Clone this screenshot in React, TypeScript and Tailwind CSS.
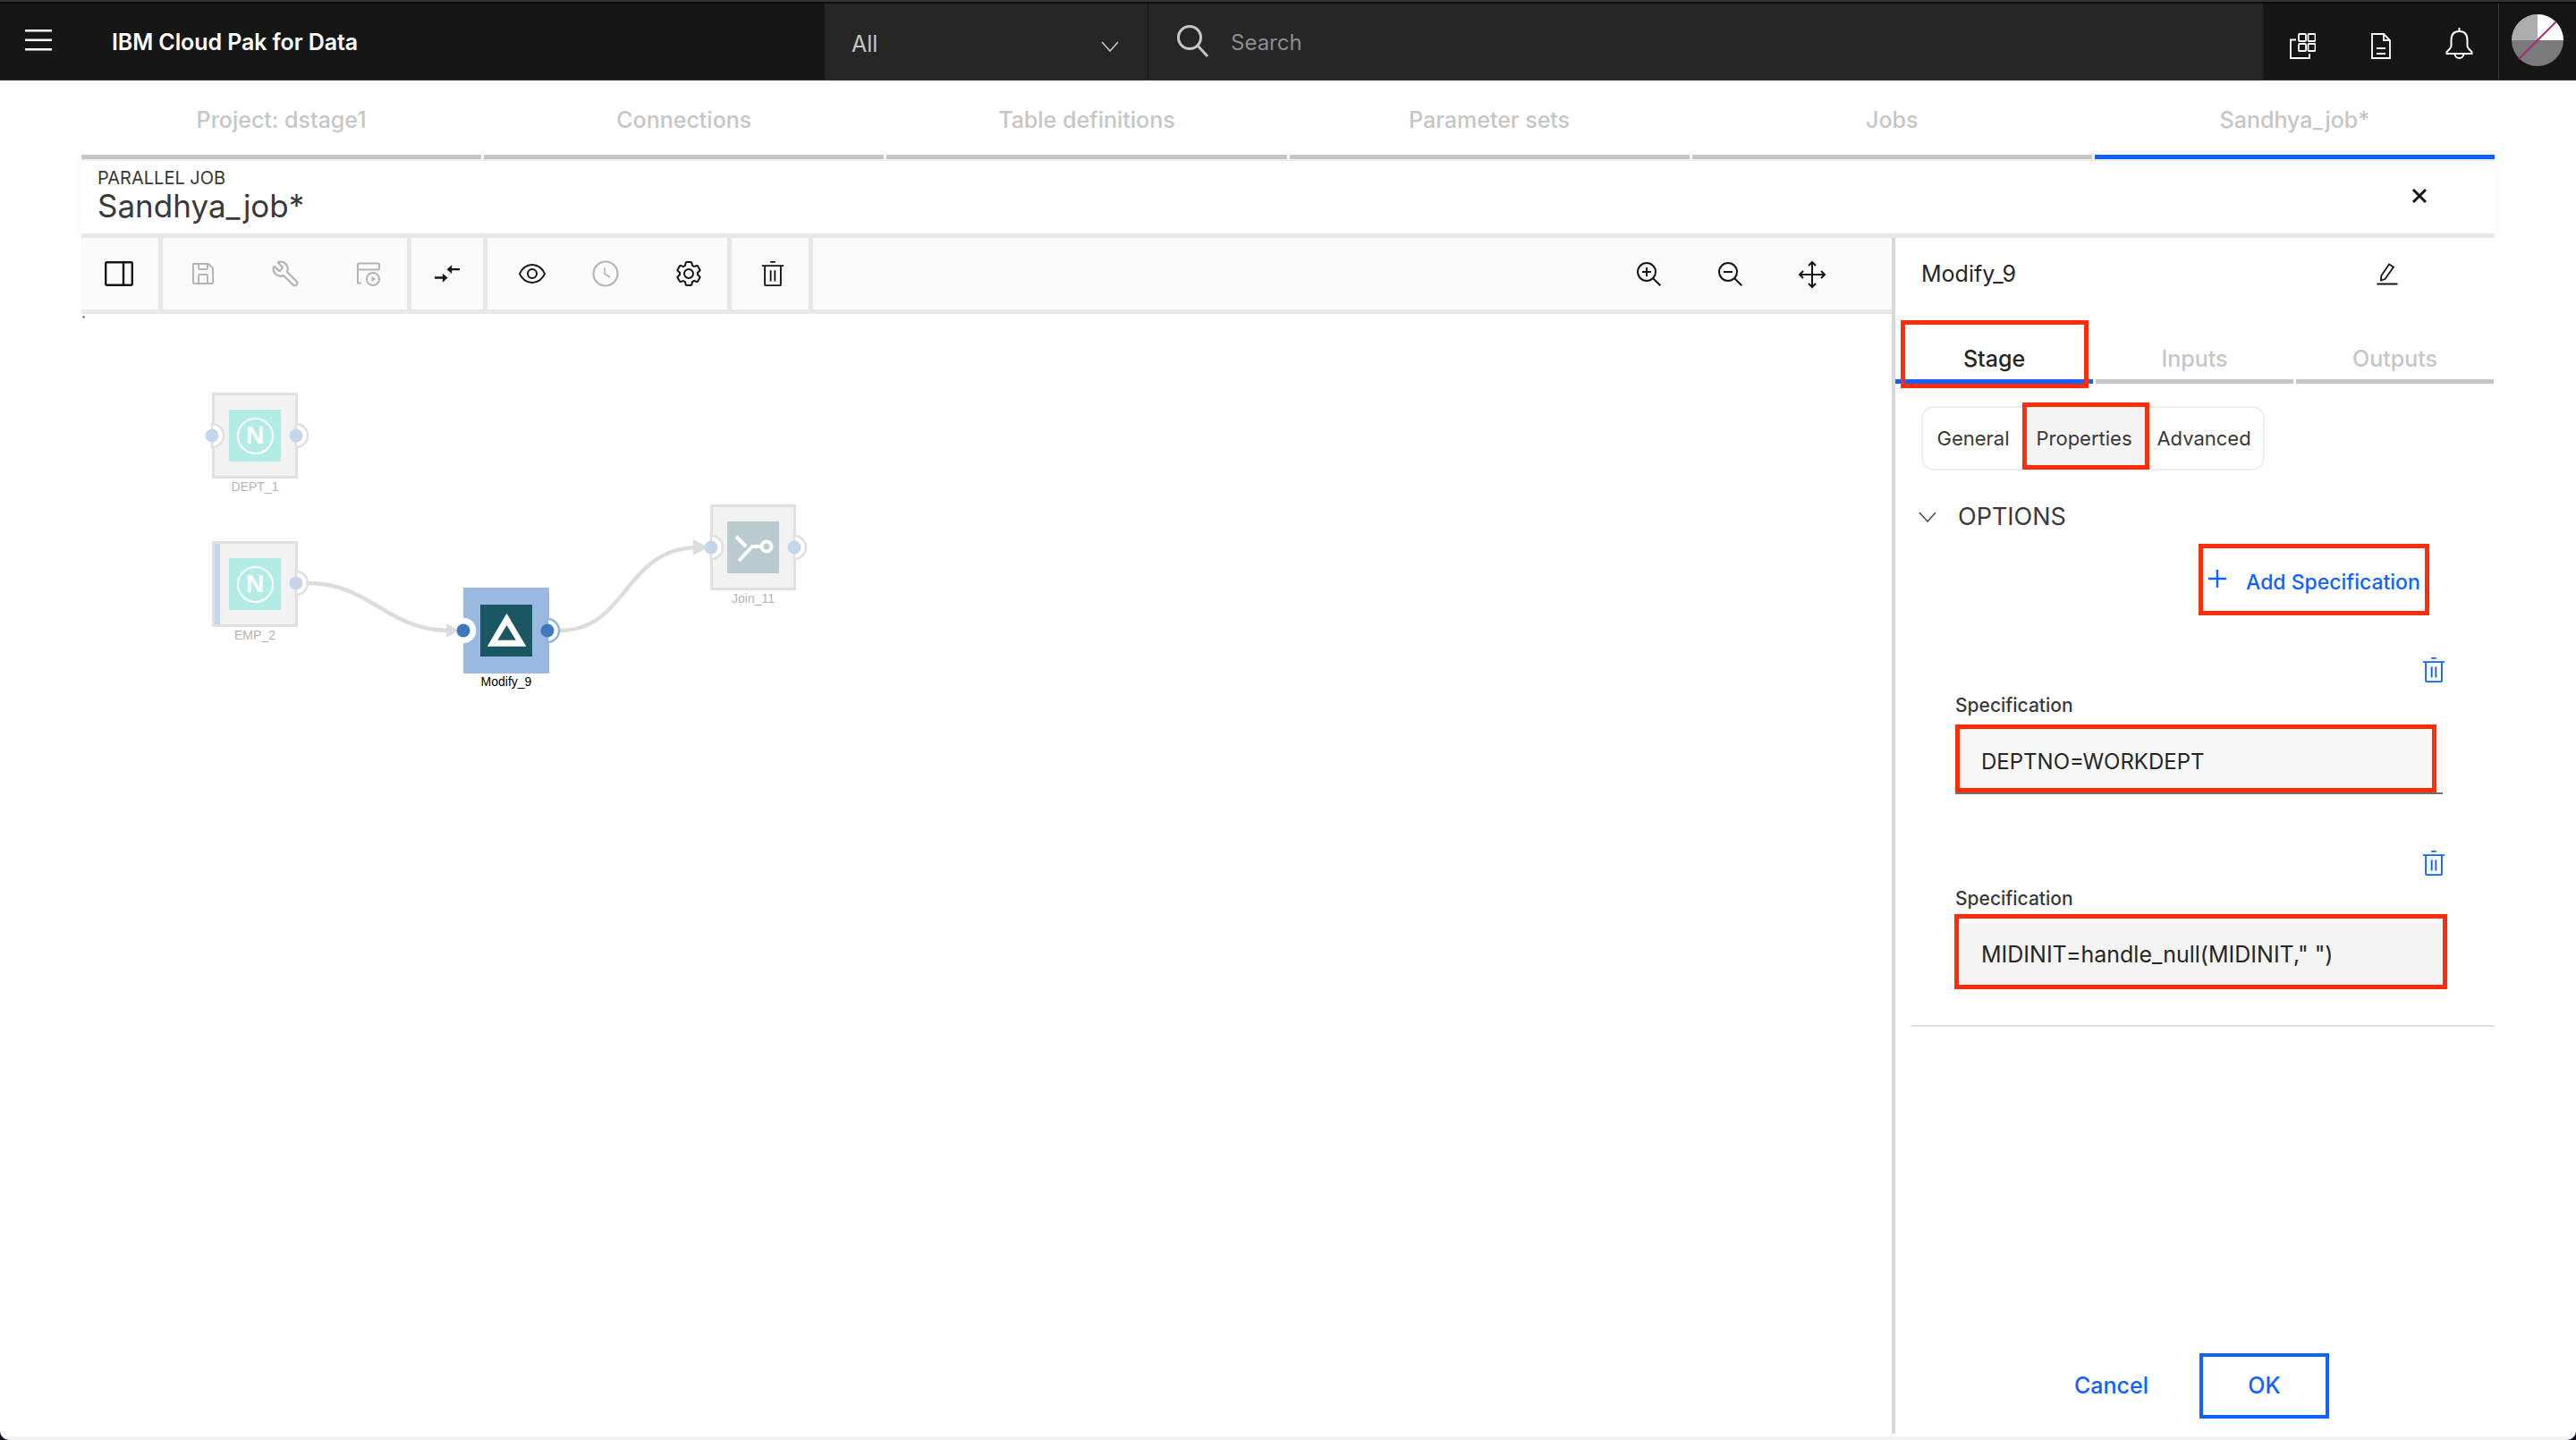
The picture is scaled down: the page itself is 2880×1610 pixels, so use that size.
import { Wrench } from 'lucide-react';

const tabs = ['Project: dstage1', 'Connections', 'Table definitions', 'Parameter sets', 'Jobs', 'Sandhya_job*'];

function SaveIcon({ className }: { className: string }) {
  return (
    <svg viewBox="0 0 32 32" fill="currentColor" className={className}>
      <path d="M27.71,9.29l-5-5A1,1,0,0,0,22,4H6A2,2,0,0,0,4,6V26a2,2,0,0,0,2,2H26a2,2,0,0,0,2-2V10A1,1,0,0,0,27.71,9.29ZM12,6h8v4H12Zm8,20H12V18h8Zm2,0V18a2,2,0,0,0-2-2H12a2,2,0,0,0-2,2v8H6V6h4v4a2,2,0,0,0,2,2h8a2,2,0,0,0,2-2V6.41l4,4V26Z" />
    </svg>
  );
}

function PanelIcon() {
  return (
    <svg viewBox="0 0 32 28" fill="none" stroke="currentColor" strokeWidth="2.4" className="w-[32px] h-[28px] text-[#161616]">
      <rect x="1.2" y="1.2" width="29.6" height="25.6" rx="1.5" />
      <path d="M21 1.2v25.6" />
    </svg>
  );
}

function RunIcon() {
  return (
    <svg viewBox="0 0 32 32" fill="none" stroke="currentColor" strokeWidth="2" className="w-[32px] h-[32px] text-[#b5b5b5]">
      <path d="M5 21V6a1.5 1.5 0 0 1 1.5-1.5h21A1.5 1.5 0 0 1 29 6v5.5M5 11.5h24M5 21v5.5h4" />
      <circle cx="22" cy="22" r="7" />
      <path d="M20.5 18.8v6.4l4.5-3.2z" fill="currentColor" stroke="none" />
    </svg>
  );
}

function CompressIcon() {
  return (
    <svg viewBox="0 0 32 32" fill="currentColor" className="w-[30px] h-[30px] text-[#161616]">
      <path d="M31 9.5H21.5V12H31zM21.5 5.5 15.5 10.8l6 5.2zM1 19.5h9.5V22H1zM10.5 15.7 16.5 20.8l-6 5.5z" />
    </svg>
  );
}

function EyeIcon() {
  return (
    <svg viewBox="0 0 32 32" fill="currentColor" className="w-[32px] h-[32px] text-[#161616]">
      <path d="M30.94,15.66A16.69,16.69,0,0,0,16,5,16.69,16.69,0,0,0,1.06,15.66a1,1,0,0,0,0,.68A16.69,16.69,0,0,0,16,27,16.69,16.69,0,0,0,30.94,16.34a1,1,0,0,0,0-.68ZM16,25c-5.3,0-10.9-3.93-12.93-9C5.1,10.93,10.7,7,16,7s10.9,3.93,12.93,9C26.9,21.07,21.3,25,16,25Z" />
      <path d="M16,10a6,6,0,1,0,6,6A6,6,0,0,0,16,10Zm0,10a4,4,0,1,1,4-4A4,4,0,0,1,16,20Z" />
    </svg>
  );
}

function ClockIcon() {
  return (
    <svg viewBox="0 0 32 32" fill="none" stroke="currentColor" strokeWidth="2.2" className="w-[32px] h-[32px] text-[#b5b5b5]">
      <circle cx="16" cy="16" r="13.5" />
      <path d="M15 9v7l6 4" strokeWidth="1.6" />
    </svg>
  );
}

function GearIcon() {
  return (
    <svg viewBox="0 0 32 32" fill="currentColor" className="w-[32px] h-[32px] text-[#161616]">
      <path d="M27,16.76c0-.25,0-.5,0-.76s0-.51,0-.77l1.92-1.68A2,2,0,0,0,29.3,11L26.94,7a2,2,0,0,0-1.73-1,2,2,0,0,0-.64.1l-2.43.82a11.35,11.35,0,0,0-1.31-.75l-.51-2.52a2,2,0,0,0-2-1.61H13.64a2,2,0,0,0-2,1.61l-.51,2.52a11.48,11.48,0,0,0-1.32.75L7.43,6.06A2,2,0,0,0,6.79,6,2,2,0,0,0,5.06,7L2.7,11a2,2,0,0,0,.41,2.51L5,15.24c0,.25,0,.5,0,.76s0,.51,0,.77L3.11,18.45A2,2,0,0,0,2.7,21L5.06,25a2,2,0,0,0,1.73,1,2,2,0,0,0,.64-.1l2.43-.82a11.35,11.35,0,0,0,1.31.75l.51,2.52a2,2,0,0,0,2,1.61h4.72a2,2,0,0,0,2-1.61l.51-2.52a11.48,11.48,0,0,0,1.32-.75l2.42.82a2,2,0,0,0,.64.1,2,2,0,0,0,1.73-1L29.3,21a2,2,0,0,0-.41-2.51ZM25.21,24l-3.43-1.16a8.86,8.86,0,0,1-2.71,1.57L18.36,28H13.64l-.71-3.55a9.36,9.36,0,0,1-2.7-1.57L6.79,24,4.43,20l2.72-2.4a8.9,8.9,0,0,1,0-3.13L4.43,12,6.79,8l3.43,1.16a8.86,8.86,0,0,1,2.71-1.57L13.64,4h4.72l.71,3.55a9.36,9.36,0,0,1,2.7,1.57L25.21,8,27.57,12l-2.72,2.4a8.9,8.9,0,0,1,0,3.13L27.57,20Z" />
      <path d="M16,22a6,6,0,1,1,6-6A5.94,5.94,0,0,1,16,22Zm0-10a3.91,3.91,0,0,0-4,4,3.91,3.91,0,0,0,4,4,3.91,3.91,0,0,0,4-4A3.91,3.91,0,0,0,16,12Z" />
    </svg>
  );
}

function TrashIcon({ className }: { className: string }) {
  return (
    <svg viewBox="0 0 32 32" fill="none" stroke="currentColor" strokeWidth="2" className={className}>
      <path d="M13 2h6M3 6.5h26" />
      <path d="M6.5 6.5V29a1 1 0 0 0 1 1h17a1 1 0 0 0 1-1V6.5" />
      <path d="M13.5 12v13M18.5 12v13" />
    </svg>
  );
}

function ZoomIcon({ plus }: { plus?: boolean }) {
  return (
    <svg viewBox="0 0 32 32" fill="currentColor" className="w-[32px] h-[32px] text-[#161616]">
      {plus ? <path d="M18 12 14 12 14 8 12 8 12 12 8 12 8 14 12 14 12 18 14 18 14 14 18 14 18 12z" /> : <path d="M8 12H18V14H8z" />}
      <path d="M21.4479,20A10.856,10.856,0,0,0,24,13,11,11,0,1,0,13,24a10.856,10.856,0,0,0,7-2.5521L27.5859,29,29,27.5859ZM13,22a9,9,0,1,1,9-9A9.01,9.01,0,0,1,13,22Z" />
    </svg>
  );
}

function MoveIcon() {
  return (
    <svg viewBox="0 0 32 32" fill="none" stroke="currentColor" strokeWidth="2" className="w-[32px] h-[32px] text-[#161616]">
      <path d="M16 2v28M2 16h28M12 6l4-4 4 4M12 26l4 4 4-4M6 12l-4 4 4 4M26 12l4 4-4 4" />
    </svg>
  );
}

function Port({ x, y, dot, ring, fill = 'white' }: { x: number; y: number; dot: string; ring: string; fill?: string }) {
  // half ring bulging to the right of the node edge, with the port dot on the edge
  return (
    <svg viewBox="0 0 32 32" className="absolute w-[32px] h-[32px]" style={{ left: x - 16, top: y - 16 }}>
      <path d="M16 3a13 13 0 0 1 0 26z" fill={fill} stroke={ring} strokeWidth="2.5" />
      <ellipse cx="16" cy="16" rx="7.5" ry="7.5" fill={dot} />
    </svg>
  );
}

function CircleN() {
  return (
    <div className="w-[58px] h-[58px] bg-[#b3ebe5] flex items-center justify-center">
      <div className="w-[41px] h-[41px] rounded-full border-2 border-white flex items-center justify-center text-white font-black text-[28px] leading-none font-['Liberation_Sans','sans-serif']">
        N
      </div>
    </div>
  );
}

function SourceNode({ x, y, label, strip }: { x: number; y: number; label: string; strip?: boolean }) {
  return (
    <div className="absolute w-[96px] flex flex-col items-center" style={{ left: x, top: y }}>
      <div className="w-[96px] h-[96px] bg-[#f2f2f2] border-[3px] border-[#e0e0e0] flex items-center justify-center relative">
        {strip && <div className="absolute left-0 top-0 bottom-0 w-[6px] bg-[#c5d5ea]" />}
        <CircleN />
      </div>
      <span className="text-[14px] leading-[18px] text-[#b4b4b4] font-['Liberation_Sans','sans-serif']">{label}</span>
    </div>
  );
}

function Canvas() {
  return (
    <div className="flex-1 relative bg-white">
      <div className="absolute left-[1px] top-[2px] w-[3px] h-[3px] rounded-full bg-[#8d8d8d]" />
      <svg className="absolute inset-0 w-full h-full" fill="none">
        <path d="M253 301 C 325 301, 340 354, 412 354" stroke="#dcdcdc" strokeWidth="4.5" />
        <path d="M408 346 L422 354 L408 362z" fill="#dcdcdc" />
        <path d="M534 354 C 612 354, 606 261, 690 261" stroke="#dcdcdc" strokeWidth="4.5" />
        <path d="M684 252 L701 261 L684 270z" fill="#dcdcdc" />
      </svg>

      <SourceNode x={146} y={88} label="DEPT_1" />
      <Port x={146} y={136} dot="#c5d5ea" ring="#e0e0e0" />
      <Port x={240} y={136} dot="#c5d5ea" ring="#e0e0e0" />

      <SourceNode x={146} y={254} label="EMP_2" strip />
      <Port x={240} y={301} dot="#c5d5ea" ring="#e0e0e0" />

      <div className="absolute w-[96px] flex flex-col items-center left-[427px] top-[306px]">
        <div className="w-[96px] h-[96px] bg-[#9ab9e0] flex items-center justify-center">
          <div className="w-[58px] h-[58px] bg-[#1a5763]">
            <svg viewBox="0 0 58 58" className="w-[58px] h-[58px]" fill="white">
              <path fillRule="evenodd" d="M29.5 9.7L51.3 46.7H7.8Z M29.5 23L19.4 39.7H39.8Z" />
            </svg>
          </div>
        </div>
        <span className="text-[14px] leading-[18px] text-black font-['Liberation_Sans','sans-serif']">Modify_9</span>
      </div>
      <Port x={427} y={354} dot="#3f78bc" ring="#ffffff" />
      <Port x={521} y={354} dot="#3f78bc" ring="#8fb4e0" />

      <div className="absolute w-[96px] flex flex-col items-center left-[703px] top-[213px]">
        <div className="w-[96px] h-[96px] bg-[#f2f2f2] border-[3px] border-[#e0e0e0] flex items-center justify-center">
          <div className="w-[58px] h-[58px] bg-[#bacbd0]">
            <svg viewBox="0 0 58 58" className="w-[58px] h-[58px]" fill="none" stroke="white" strokeWidth="4">
              <path d="M10 17l11 11M13 44l15-16h11" />
              <circle cx="44" cy="28" r="5.5" />
            </svg>
          </div>
        </div>
        <span className="text-[14px] leading-[18px] text-[#b4b4b4] font-['Liberation_Sans','sans-serif']">Join_11</span>
      </div>
      <Port x={704} y={261} dot="#c5d5ea" ring="#e0e0e0" />
      <Port x={797} y={261} dot="#c5d5ea" ring="#e0e0e0" />
    </div>
  );
}

function RedBox({ className }: { className: string }) {
  return <div className={`absolute border-[5px] border-[#ff2d0a] pointer-events-none ${className}`} />;
}

function Toolbar() {
  return (
    <div className="h-[80px] bg-[#fafafa] flex items-center">
      <div className="w-[86px] h-full flex items-center pl-[26px] text-[#161616]">
        <PanelIcon />
      </div>
      <div className="w-[5px] h-full bg-[#e8e8e8]" />
      <div className="w-[273px] h-full flex items-center pl-[29px] gap-[60px]">
        <SaveIcon className="w-[32px] h-[32px] text-[#b5b5b5]" />
        <Wrench className="w-[32px] h-[32px] text-[#b5b5b5] -scale-x-100" strokeWidth={1.7} />
        <RunIcon />
      </div>
      <div className="w-[5px] h-full bg-[#e8e8e8]" />
      <div className="w-[80px] h-full flex items-center justify-center">
        <CompressIcon />
      </div>
      <div className="w-[5px] h-full bg-[#e8e8e8]" />
      <div className="w-[268px] h-full flex items-center pl-[34px]">
        <EyeIcon />
        <div className="ml-[50px]">
          <ClockIcon />
        </div>
        <div className="ml-[61px]">
          <GearIcon />
        </div>
      </div>
      <div className="w-[5px] h-full bg-[#e8e8e8]" />
      <div className="w-[86px] h-full flex items-center pl-[31px]">
        <TrashIcon className="w-[30px] h-[30px] text-[#161616]" />
      </div>
      <div className="w-[5px] h-full bg-[#e8e8e8]" />
      <div className="flex-1 flex items-center justify-end gap-[59px] pr-[73px] pt-[1px]">
        <ZoomIcon plus />
        <ZoomIcon />
        <MoveIcon />
      </div>
    </div>
  );
}

function Spec({ value, trashGap, inputClass, boxClass }: { value: string; trashGap: string; inputClass: string; boxClass: string }) {
  return (
    <div className={`w-[550px] ml-[67px] ${trashGap}`}>
      <div className="flex justify-end">
        <TrashIcon className="w-[30px] h-[30px] text-[#0f62fe]" />
      </div>
      <div className="mt-[13px] text-[21px] leading-[24px] font-medium text-[#393939]">Specification</div>
      <div className={`w-[545px] relative flex items-center pl-[29px] text-[#262626] ${inputClass}`}>
        {value}
        <RedBox className={boxClass} />
      </div>
    </div>
  );
}

function RightPanel() {
  return (
    <div className="flex-1 flex flex-col">
      <div className="h-[80px] flex items-center justify-between pl-[29px] pr-[108px] pt-[2px] text-[25px] text-[#262626]">
        Modify_9
        <svg viewBox="0 0 24 26" fill="none" stroke="#161616" strokeWidth="1.8" className="w-[24px] h-[26px] -mt-[2px]">
          <path d="M14 2.5l5 3L9.5 19 5 20.5l.2-5z" />
          <path d="M0.5 24.5h23" strokeWidth="2" />
        </svg>
      </div>
      <div className="h-[83px] flex gap-[3px] text-[25px] font-medium text-center">
        <div className="w-[221px] flex flex-col justify-end border-b-[5px] border-[#0f62fe] pb-[11px] leading-[24px] text-[#262626] relative">
          Stage
          <RedBox className="left-[6px] right-[5px] top-[12px] bottom-[-10px]" />
        </div>
        <div className="w-[221px] flex flex-col justify-end border-b-[5px] border-[#c6c6c6] pb-[11px] leading-[24px] text-[#c6c6c6]">Inputs</div>
        <div className="w-[221px] flex flex-col justify-end border-b-[5px] border-[#c6c6c6] pb-[11px] leading-[24px] text-[#c6c6c6]">Outputs</div>
      </div>
      <div className="ml-[29px] mt-[25px] w-[384px] h-[72px] border-2 border-[#eeeeee] rounded-[14px] flex text-[22px] text-[#393939]">
        <div className="w-[112px] flex items-center justify-center">General</div>
        <div className="w-[136px] flex items-center justify-center bg-[#f4f4f4] relative">
          Properties
          <RedBox className="left-[-1px] right-[-5px] top-[-6px] bottom-[-1px]" />
        </div>
        <div className="flex-1 flex items-center justify-center">Advanced</div>
      </div>
      <div className="ml-[26px] mt-[37px] h-[30px] flex items-center">
        <svg viewBox="0 0 20 12" fill="none" stroke="#4a4a5a" strokeWidth="1.6" className="w-[20px] h-[12px]">
          <path d="M1 1l9 10 9-10" />
        </svg>
        <span className="ml-[24px] text-[27px] text-[#393939]">OPTIONS</span>
      </div>
      <div className="ml-[339px] mt-[15px] w-[258px] h-[80px] relative flex items-center pt-[6px] text-[#0f62fe]">
        <svg viewBox="0 0 18 18" fill="none" stroke="currentColor" strokeWidth="2.2" className="w-[20px] h-[20px] ml-[11px] -mt-[8px]">
          <path d="M9 0v18M0 9h18" />
        </svg>
        <span className="ml-[22px] text-[23px] font-medium">Add Specification</span>
        <RedBox className="inset-0" />
      </div>
      <Spec
        value="DEPTNO=WORKDEPT"
        trashGap="mt-[46px]"
        inputClass="mt-[14px] h-[73px] pt-[2px] text-[24px] bg-[#f7f7f7] border-b-2 border-[#6f6f6f]"
        boxClass="left-0 right-[7px] top-[-5px] bottom-0"
      />
      <Spec
        value={'MIDINIT=handle_null(MIDINIT," ")'}
        trashGap="mt-[62px]"
        inputClass="mt-[15px] h-[69px] pt-[2px] text-[25px] bg-[#f4f4f4]"
        boxClass="left-[-1px] right-[-5px] top-[-10px] bottom-[-5px]"
      />
      <div className="mt-[45px] ml-[18px] h-[2px] bg-[#e0e0e0]" />
      <div className="mt-auto mb-[17px] flex items-center justify-end pr-[185px] text-[25px] font-medium text-[#0f62fe]">
        <span>Cancel</span>
        <div className="ml-[57px] w-[145px] h-[73px] border-[4px] border-[#0f62fe] flex items-center justify-center">OK</div>
      </div>
    </div>
  );
}

export default function App() {
  return (
    <div className="w-[2880px] h-[1610px] bg-white flex flex-col overflow-hidden relative font-['Inter','sans-serif']">
      {/* top bar */}
      <div className="h-[2px] bg-[#333333]" />
      <div className="h-[2px] bg-[#0e0e0e]" />
      <div className="h-[86px] flex bg-[#161616] border-b border-[#333333] text-[25px]">
        <div className="w-[922px] flex items-center">
          <svg viewBox="0 0 30 24" fill="white" className="w-[30px] h-[24px] ml-[28px] -mt-[4px]">
            <rect y="0" width="30" height="2.5" />
            <rect y="10.5" width="30" height="2.5" />
            <rect y="21" width="30" height="2.5" />
          </svg>
          <span className="ml-[67px] font-semibold tracking-[-0.1px] text-white pt-[3px]">IBM Cloud Pak for Data</span>
        </div>
        <div className="w-[362px] flex items-center justify-between bg-[#262626] pl-[30px] pr-[32px] border-r border-[#161616] text-[#c6c6c6] pt-[6px]">
          <span>All</span>
          <svg viewBox="0 0 20 12" fill="none" stroke="#c6c6c6" strokeWidth="1.6" className="w-[20px] h-[12px] mt-[4px]">
            <path d="M1 1l9 10 9-10" />
          </svg>
        </div>
        <div className="w-[1246px] flex items-center bg-[#262626] pl-[31px]">
          <svg viewBox="0 0 38 38" fill="none" stroke="#c6c6c6" strokeWidth="3" className="w-[38px] h-[38px] -mt-[2px]">
            <circle cx="15" cy="15" r="12.5" />
            <path d="M24 24l11 12" />
          </svg>
          <span className="ml-[23px] text-[24px] text-[#8d8d8d] pt-[3px]">Search</span>
        </div>
        <div className="w-[263px] flex items-center text-white pl-[30px]">
          <svg viewBox="0 0 29 29" fill="none" stroke="currentColor" strokeWidth="1.8" className="w-[29px] h-[29px] mt-[9px]">
            <rect x="10" y="1" width="8" height="8" rx="1" />
            <rect x="20.5" y="1" width="8" height="8" rx="1" />
            <rect x="10" y="12" width="8" height="8" rx="1" />
            <rect x="20.5" y="12" width="8" height="8" rx="1" />
            <path d="M7 7.5H1v20.5h21v-5" />
          </svg>
          <svg viewBox="0 0 22 29" fill="none" stroke="currentColor" strokeWidth="1.8" className="w-[22px] h-[29px] ml-[62px] mt-[9px]">
            <path d="M1 1h13l7 7v20H1zM14 1v7h7M6 17h10M6 23h10" />
          </svg>
          <svg viewBox="0 0 31 35" fill="none" stroke="currentColor" strokeWidth="2" className="w-[31px] h-[35px] ml-[61px] mt-[3px]">
            <path d="M15.5 0v4M15.5 4c-6 0-9 4-9 10v6c0 3-3 5-5 7v2h28v-2c-2-2-5-4-5-7v-6c0-6-3-10-9-10zM10.5 29a5 5 0 0 0 10 0" />
          </svg>
        </div>
        <div className="flex-1 flex items-center justify-center border-l border-[#393939]">
          <svg viewBox="0 0 58 58" className="w-[58px] h-[58px] -mt-[4px]">
            <circle cx="29" cy="29" r="29" fill="#7a7a7a" />
            <path d="M29 29V0A29 29 0 0 0 0 29z" fill="#adadad" />
            <path d="M29 29V0A29 29 0 0 1 58 29z" fill="#ffffff" />
            <path d="M50 8L8 50" stroke="#a82a7a" strokeWidth="2" />
          </svg>
        </div>
      </div>

      <div className="flex-1 flex flex-col mx-[91px] w-[2698px] min-h-0">
        {/* page tabs */}
        <div className="h-[88px] flex gap-[3px] text-[25px] font-medium text-[#c6c6c6] text-center">
          {tabs.map((t, i) => (
            <div
              key={t}
              className={`flex-1 flex flex-col justify-center pt-[6px] border-b-[5px] ${i === 5 ? 'border-[#0f62fe]' : 'border-[#c8c8c8]'}`}
            >
              {t}
            </div>
          ))}
        </div>
        <div className="h-[2px] bg-[#f4f4f4]" />
        {/* title */}
        <div className="h-[81px] bg-white flex items-center justify-between pl-[18px] pr-[75px] shadow-[0_0_10px_rgba(0,0,0,0.06)]">
          <div className="flex flex-col -mt-[6px]">
            <span className="text-[20px] leading-[24px] text-[#393939]">PARALLEL JOB</span>
            <span className="text-[35px] leading-[38px] text-[#393939]">Sandhya_job*</span>
          </div>
          <svg viewBox="0 0 18 18" fill="none" stroke="#161616" strokeWidth="3" className="w-[18px] h-[18px] -mt-[3px]">
            <path d="M2 2l14 14M16 2L2 16" />
          </svg>
        </div>
        <div className="h-[5px] bg-[#e8e8e8]" />
        {/* editor */}
        <div className="flex-1 flex min-h-0">
          <div className="w-[2024px] flex flex-col">
            <Toolbar />
            <div className="h-[5px] bg-[#e8e8e8]" />
            <Canvas />
          </div>
          <div className="w-[4px] bg-[#d8d8d8]" />
          <RightPanel />
        </div>
      </div>
      <div className="h-[7px] flex flex-col justify-end">
        <div className="h-[4px] bg-[#f2f2f2]" />
      </div>

      {/* window corners */}
      <svg viewBox="0 0 10 10" className="absolute left-0 bottom-0 w-[10px] h-[10px]">
        <path d="M0 0a10 10 0 0 0 10 10H0z" fill="#0b0f1a" />
      </svg>
      <svg viewBox="0 0 10 10" className="absolute right-0 bottom-0 w-[10px] h-[10px]">
        <path d="M10 0a10 10 0 0 1-10 10h10z" fill="#0b0f1a" />
      </svg>
    </div>
  );
}
